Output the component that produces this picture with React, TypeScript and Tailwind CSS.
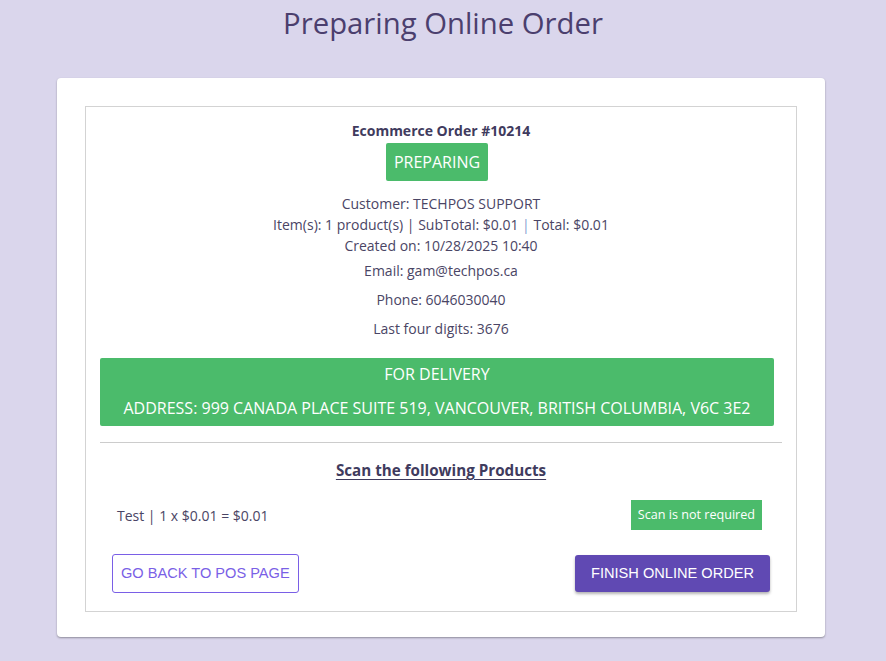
const GREEN = "bg-[#4bbb6b]";

function InfoLine({ children, className = "" }: { children: React.ReactNode; className?: string }) {
  return <p className={"text-[14px] leading-[21px] text-[#4a4565] " + className}>{children}</p>;
}

export default function App() {
  return (
    <div className="min-h-[661px] bg-[#dad6ec] font-['Open_Sans',sans-serif] pb-[26px]">
      <h1 className="pt-[4px] text-center text-[29.3px] leading-[38px] text-[#4b3f6e]">
        Preparing Online Order
      </h1>

      <div className="ml-[57px] mt-[36px] w-[768px] rounded-[4px] bg-white px-[28px] pt-[28px] pb-[25px] shadow-[0_1px_2px_rgba(0,0,0,0.35)]">
        <div className="border border-[#d3d3d3] px-[14px] pt-[15px] pb-[18px]">
          <div className="flex flex-col items-center">
            <h2 className="text-[14px] font-bold leading-[18px] text-[#3f3b5e]">Ecommerce Order #10214</h2>
            <span className={GREEN + " mt-[3px] mr-[8px] rounded-[2px] px-[8px] py-[7px] text-[16px] leading-[24px] text-white"}>
              PREPARING
            </span>
            <div className="mt-[12px] flex flex-col items-center">
              <InfoLine>Customer: TECHPOS SUPPORT</InfoLine>
              <InfoLine>
                Item(s): 1 product(s) | SubTotal: $0.01 <span className="text-[#7f9ad0]">|</span> Total: $0.01
              </InfoLine>
              <InfoLine>Created on: 10/28/2025 10:40</InfoLine>
              <InfoLine className="mt-[4px]">Email: gam@techpos.ca</InfoLine>
              <InfoLine className="mt-[8px]">Phone: 6046030040</InfoLine>
              <InfoLine className="mt-[8px]">Last four digits: 3676</InfoLine>
            </div>
          </div>

          <div className="mt-[19px] mr-[8px] text-center text-[16px] text-white">
            <div className={GREEN + " rounded-t-[2px] py-[4px] leading-[24px]"}>FOR DELIVERY</div>
            <div className={GREEN + " rounded-b-[2px] py-[6px] leading-[24px]"}>
              ADDRESS: 999 CANADA PLACE SUITE 519, VANCOUVER, BRITISH COLUMBIA, V6C 3E2
            </div>
          </div>

          <hr className="mt-[16px] border-t border-[#cccccc]" />

          <h3 className="mt-[16px] text-center text-[15.2px] font-bold leading-[22px] text-[#3f3b5e] underline underline-offset-[3px]">
            Scan the following Products
          </h3>

          <div className="mt-[19px] flex items-center justify-between pl-[17px] pr-[20px]">
            <span className="text-[14px] text-[#4a4565]">Test | 1 x $0.01 = $0.01</span>
            <span className={GREEN + " px-[7px] py-[5px] text-[12.6px] leading-[20px] text-white"}>
              Scan is not required
            </span>
          </div>

          <div className="mt-[24px] flex items-center justify-between px-[12px] font-['Liberation_Sans',Arial,sans-serif]">
            <button className="h-[39px] rounded-[3px] border border-[#7a5fe6] px-[8px] text-[14.6px] text-[#7a5fe6]">
              GO BACK TO POS PAGE
            </button>
            <button className="h-[37px] rounded-[3px] bg-[#6049b3] px-[16px] text-[14.6px] text-white shadow-[0_2px_3px_rgba(0,0,0,0.3)]">
              FINISH ONLINE ORDER
            </button>
          </div>
        </div>
      </div>
    </div>
  );
}
